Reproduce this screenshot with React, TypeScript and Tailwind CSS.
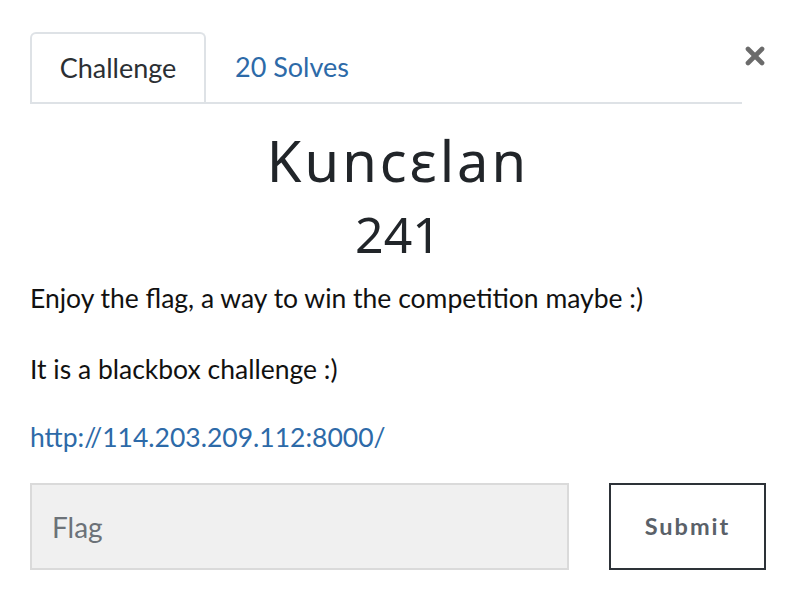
import { X } from "lucide-react";

function Tabs() {
  return (
    <div className="flex items-start">
      <div className="flex w-[712px] border-b-2 border-[#dee2e6]">
        <div className="-mb-[2px] flex h-[70px] w-[176px] items-center justify-center rounded-t-[6px] border-2 border-b-0 border-[#dee2e6] bg-white text-[27px] text-[#2b2f33]">
          Challenge
        </div>
        <div className="flex h-[70px] items-center pl-[29px] text-[27px] text-[#2d6aa8]">20 Solves</div>
      </div>
      <button className="ml-[-1px] mt-[10px] text-[#6b6b6b]">
        <X size={28} strokeWidth={4} />
      </button>
    </div>
  );
}

export default function App() {
  return (
    <div className="h-[611px] w-[800px] bg-white pl-[30px] pt-[32px] font-['Lato','Liberation_Sans',sans-serif]">
      <Tabs />
      <div className="w-[736px]">
        <h1 className="mt-[21px] text-center font-['Noto_Sans',sans-serif] text-[56px] leading-[70px] tracking-[3px] text-[#212529]">
          Kuncɛlan
        </h1>
        <div className="mt-[9px] text-center font-['Noto_Sans',sans-serif] text-[50px] leading-[60px] text-[#212529]">241</div>
      </div>
      <div className="mt-[16px] text-[26.5px] leading-[36px] text-[#111]">
        <p>Enjoy the flag, a way to win the competition maybe :)</p>
        <p className="mt-[35px]">It is a blackbox challenge :)</p>
        <p className="mt-[32px]">
          <a className="text-[#2d6aa8]">http://114.203.209.112:8000/</a>
        </p>
      </div>
      <div className="mt-[28px] flex items-center">
        <input
          placeholder="Flag"
          className="h-[87px] w-[539px] border-2 border-[#dadada] bg-[#f0f0f0] px-[20px] text-[28px] placeholder:text-[#6c7278] outline-none"
        />
        <button className="ml-[40px] h-[87px] w-[157px] border-2 border-[#2d3238] bg-white text-[23.5px] font-bold tracking-[2px] text-[#5a6169]">
          Submit
        </button>
      </div>
    </div>
  );
}
